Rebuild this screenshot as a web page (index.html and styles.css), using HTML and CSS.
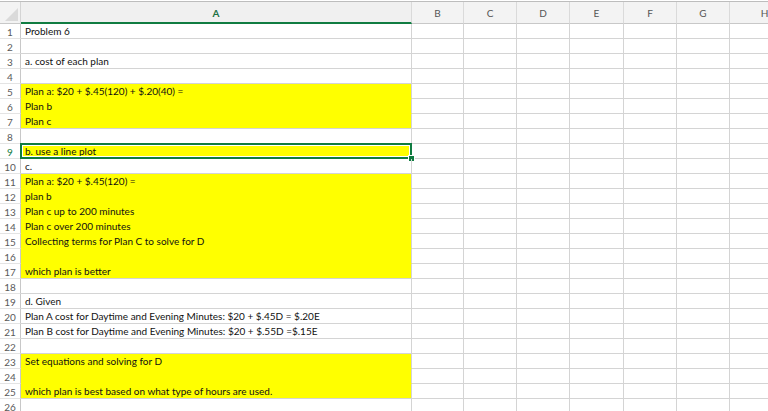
FILE: index.html
```html
<!DOCTYPE html>
<html>
<head>
<meta charset="utf-8">
<link rel="stylesheet" href="styles.css">
</head>
<body>
<div class="sheet">
  <div class="row head">
    <div class="corner"><span class="tri"></span></div>
    <div class="ch sel">A</div><div class="ch">B</div><div class="ch">C</div><div class="ch">D</div><div class="ch">E</div><div class="ch">F</div><div class="ch">G</div><div class="ch">H</div>
  </div>
  <div class="row"><div class="rh">1</div><div class="c a">Problem 6</div><div class="c"></div><div class="c"></div><div class="c"></div><div class="c"></div><div class="c"></div><div class="c"></div><div class="c"></div></div>
  <div class="row"><div class="rh">2</div><div class="c a"></div><div class="c"></div><div class="c"></div><div class="c"></div><div class="c"></div><div class="c"></div><div class="c"></div><div class="c"></div></div>
  <div class="row"><div class="rh">3</div><div class="c a">a. cost of each plan</div><div class="c"></div><div class="c"></div><div class="c"></div><div class="c"></div><div class="c"></div><div class="c"></div><div class="c"></div></div>
  <div class="row"><div class="rh">4</div><div class="c a"></div><div class="c"></div><div class="c"></div><div class="c"></div><div class="c"></div><div class="c"></div><div class="c"></div><div class="c"></div></div>
  <div class="row"><div class="rh">5</div><div class="c a y">Plan a: $20 + $.45(120) + $.20(40) =</div><div class="c"></div><div class="c"></div><div class="c"></div><div class="c"></div><div class="c"></div><div class="c"></div><div class="c"></div></div>
  <div class="row"><div class="rh">6</div><div class="c a y">Plan b</div><div class="c"></div><div class="c"></div><div class="c"></div><div class="c"></div><div class="c"></div><div class="c"></div><div class="c"></div></div>
  <div class="row"><div class="rh">7</div><div class="c a y yl">Plan c</div><div class="c"></div><div class="c"></div><div class="c"></div><div class="c"></div><div class="c"></div><div class="c"></div><div class="c"></div></div>
  <div class="row"><div class="rh">8</div><div class="c a"></div><div class="c"></div><div class="c"></div><div class="c"></div><div class="c"></div><div class="c"></div><div class="c"></div><div class="c"></div></div>
  <div class="row"><div class="rh active">9</div><div class="c a y yl selected">b. use a line plot<span class="selbox"></span><span class="handle"></span></div><div class="c"></div><div class="c"></div><div class="c"></div><div class="c"></div><div class="c"></div><div class="c"></div><div class="c"></div></div>
  <div class="row"><div class="rh">10</div><div class="c a">c.</div><div class="c"></div><div class="c"></div><div class="c"></div><div class="c"></div><div class="c"></div><div class="c"></div><div class="c"></div></div>
  <div class="row"><div class="rh">11</div><div class="c a y">Plan a: $20 + $.45(120) =</div><div class="c"></div><div class="c"></div><div class="c"></div><div class="c"></div><div class="c"></div><div class="c"></div><div class="c"></div></div>
  <div class="row"><div class="rh">12</div><div class="c a y">plan b</div><div class="c"></div><div class="c"></div><div class="c"></div><div class="c"></div><div class="c"></div><div class="c"></div><div class="c"></div></div>
  <div class="row"><div class="rh">13</div><div class="c a y">Plan c up to 200 minutes</div><div class="c"></div><div class="c"></div><div class="c"></div><div class="c"></div><div class="c"></div><div class="c"></div><div class="c"></div></div>
  <div class="row"><div class="rh">14</div><div class="c a y">Plan c over 200 minutes</div><div class="c"></div><div class="c"></div><div class="c"></div><div class="c"></div><div class="c"></div><div class="c"></div><div class="c"></div></div>
  <div class="row"><div class="rh">15</div><div class="c a y">Collecting terms for Plan C to solve for D</div><div class="c"></div><div class="c"></div><div class="c"></div><div class="c"></div><div class="c"></div><div class="c"></div><div class="c"></div></div>
  <div class="row"><div class="rh">16</div><div class="c a y"></div><div class="c"></div><div class="c"></div><div class="c"></div><div class="c"></div><div class="c"></div><div class="c"></div><div class="c"></div></div>
  <div class="row"><div class="rh">17</div><div class="c a y yl">which plan is better</div><div class="c"></div><div class="c"></div><div class="c"></div><div class="c"></div><div class="c"></div><div class="c"></div><div class="c"></div></div>
  <div class="row"><div class="rh">18</div><div class="c a"></div><div class="c"></div><div class="c"></div><div class="c"></div><div class="c"></div><div class="c"></div><div class="c"></div><div class="c"></div></div>
  <div class="row"><div class="rh">19</div><div class="c a">d. Given</div><div class="c"></div><div class="c"></div><div class="c"></div><div class="c"></div><div class="c"></div><div class="c"></div><div class="c"></div></div>
  <div class="row"><div class="rh">20</div><div class="c a">Plan A cost for Daytime and Evening Minutes: $20 + $.45D = $.20E</div><div class="c"></div><div class="c"></div><div class="c"></div><div class="c"></div><div class="c"></div><div class="c"></div><div class="c"></div></div>
  <div class="row"><div class="rh">21</div><div class="c a">Plan B cost for Daytime and Evening Minutes: $20 + $.55D =$.15E</div><div class="c"></div><div class="c"></div><div class="c"></div><div class="c"></div><div class="c"></div><div class="c"></div><div class="c"></div></div>
  <div class="row"><div class="rh">22</div><div class="c a"></div><div class="c"></div><div class="c"></div><div class="c"></div><div class="c"></div><div class="c"></div><div class="c"></div><div class="c"></div></div>
  <div class="row"><div class="rh">23</div><div class="c a y">Set equations and solving for D</div><div class="c"></div><div class="c"></div><div class="c"></div><div class="c"></div><div class="c"></div><div class="c"></div><div class="c"></div></div>
  <div class="row"><div class="rh">24</div><div class="c a y"></div><div class="c"></div><div class="c"></div><div class="c"></div><div class="c"></div><div class="c"></div><div class="c"></div><div class="c"></div></div>
  <div class="row"><div class="rh">25</div><div class="c a y yl">which plan is best based on what type of hours are used.</div><div class="c"></div><div class="c"></div><div class="c"></div><div class="c"></div><div class="c"></div><div class="c"></div><div class="c"></div></div>
  <div class="row"><div class="rh">26</div><div class="c a"></div><div class="c"></div><div class="c"></div><div class="c"></div><div class="c"></div><div class="c"></div><div class="c"></div><div class="c"></div></div>
</div>
</body>
</html>
```

FILE: styles.css
```css
html, body {
  margin: 0;
  padding: 0;
  background: #ffffff;
  overflow: hidden;
}
.sheet {
  padding-top: 1px;
  width: 800px;
  font-family: Lato, "Liberation Sans", sans-serif;
}
.row {
  display: grid;
  grid-template-columns: 21px 391px 52px 53px 53px 54px 53px 53px 70px;
  height: 15px;
}
.row.head {
  height: 23px;
  background: #f3f3f3;
  border-top: 1px solid #bdbdbd;
  box-sizing: border-box;
}
.corner {
  position: relative;
  border-right: 1px solid #d4d4d4;
  border-bottom: 1px solid #c8c8c8;
}
.tri {
  position: absolute;
  right: 2px;
  bottom: 2px;
  width: 13px;
  height: 13px;
  background: #dadada;
  clip-path: polygon(100% 0, 100% 100%, 0 100%);
}
.ch {
  display: flex;
  align-items: center;
  justify-content: center;
  font-size: 10px;
  color: #555555;
  border-right: 1px solid #dadada;
  border-bottom: 1px solid #c8c8c8;
  padding-top: 1px;
}
.ch.sel {
  color: #1d7044;
  font-weight: bold;
  background: #f0f0f0;
  border-bottom: 2px solid #107c41;
}
.rh {
  display: flex;
  align-items: center;
  justify-content: center;
  font-size: 10px;
  color: #5a5a5a;
  border-right: 1px solid #c8c8c8;
  border-bottom: 1px solid #e4e4e4;
  box-sizing: border-box;
  padding-top: 1px;
}
.rh.active {
  color: #107c41;
}
.c {
  box-sizing: border-box;
  border-right: 1px solid #d4d4d4;
  border-bottom: 1px solid #d4d4d4;
  font-size: 10px;
  line-height: 14px;
  color: #111111;
  white-space: nowrap;
  overflow: visible;
}
.c.a {
  padding-left: 4px;
  position: relative;
}
.c.y {
  background: #ffff00;
  border-bottom-color: #ffff00;
}
.c.y.yl {
  border-bottom-color: #d4d4d4;
}
.selected .selbox {
  position: absolute;
  left: -1px;
  top: -1px;
  right: -1px;
  bottom: -1px;
  border: 2px solid #107c41;
  box-shadow: inset 0 0 0 1px #ffffff;
}
.selected .handle {
  position: absolute;
  right: -4px;
  bottom: -4px;
  width: 5px;
  height: 5px;
  background: #107c41;
  border: 1px solid #ffffff;
}
```
